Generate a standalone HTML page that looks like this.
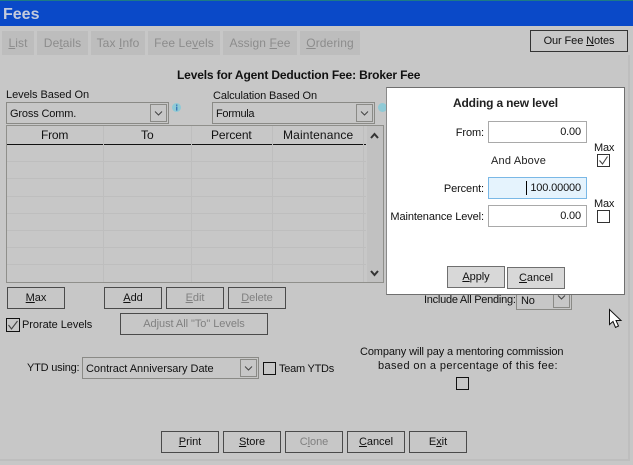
<!DOCTYPE html>
<html>
<head>
<meta charset="utf-8">
<style>
html,body{margin:0;padding:0}
body{width:633px;height:465px;overflow:hidden;position:relative;background:#c7c7c7;font-family:"Liberation Sans",sans-serif;font-size:11px;color:#111}
.a{position:absolute;box-sizing:border-box;white-space:nowrap}
.t{position:absolute;white-space:nowrap;line-height:14px;letter-spacing:0}
.tab{position:absolute;top:31px;height:24px;background:#bdbdbd;color:#8c8c8c;font-size:12px;line-height:25px;text-align:center;letter-spacing:.1px}
.b{position:absolute;box-sizing:border-box;height:22px;border:1px solid #4a4a4a;text-align:center;line-height:21px;font-size:11px;letter-spacing:-.05px;color:#111}
.dis{color:#808080}
.sel{position:absolute;box-sizing:border-box;border:1px solid #8a8a86;height:22px}
.arr{position:absolute;box-sizing:border-box;border:1px solid #8a8a86;width:17px;height:18px;right:1px;top:1px}
.cb{position:absolute;box-sizing:border-box;width:13px;height:13px;border:1px solid #111}
.inp{position:absolute;box-sizing:border-box;left:488px;width:99px;height:22px;border:1px solid #a9a9a9;background:#fff;text-align:right;padding-right:5px;line-height:21px;font-size:11px;letter-spacing:-.15px}
.lab{position:absolute;white-space:nowrap;right:149px;line-height:14px;letter-spacing:-.1px}
u{text-decoration:underline}
svg{position:absolute;overflow:visible}
</style>
</head>
<body>
<div class="a" style="left:0;top:0;width:633px;height:1px;background:#1d7a86"></div>
<div class="a" style="left:0;top:1px;width:633px;height:25px;background:#0a49c8"></div>
<div class="t" style="left:3px;top:6px;font-size:16px;font-weight:bold;color:#c4cbdc;line-height:17px;letter-spacing:0">Fees</div>

<div class="tab" style="left:2px;width:32px"><u>L</u>ist</div>
<div class="tab" style="left:37px;width:51px">De<u>t</u>ails</div>
<div class="tab" style="left:91px;width:54px">Tax <u>I</u>nfo</div>
<div class="tab" style="left:148px;width:72px">Fee Le<u>v</u>els</div>
<div class="tab" style="left:223px;width:74px">Assign <u>F</u>ee</div>
<div class="tab" style="left:300px;width:60px"><u>O</u>rdering</div>

<div class="b" style="left:530px;top:30px;width:98px;border-color:#333;letter-spacing:-.1px">Our Fee <u>N</u>otes</div>
<div class="a" style="left:628px;top:55px;width:2px;height:405px;background:#bebebe"></div>
<div class="a" style="left:0;top:459px;width:630px;height:2px;background:#bebebe"></div>

<div class="t" style="left:177px;top:68px;font-size:12px;font-weight:bold;letter-spacing:-.15px">Levels for Agent Deduction Fee: Broker Fee</div>

<div class="t" style="left:6px;top:88px;letter-spacing:-.05px">Levels Based On</div>
<div class="t" style="left:213px;top:89px;letter-spacing:-.12px">Calculation Based On</div>

<div class="sel" style="left:6px;top:102px;width:163px"><span class="t" style="left:3px;top:4px;letter-spacing:-.15px">Gross Comm.</span>
  <div class="arr"><svg width="15" height="16"><path d="M4 6.5 L7.5 10 L11 6.5" fill="none" stroke="#444" stroke-width="1"/></svg></div>
</div>
<svg style="left:172px;top:103px" width="10" height="10"><circle cx="4.5" cy="4.5" r="4.5" fill="#8fcad6"/><rect x="4" y="1.5" width="1.4" height="1.4" fill="#3a78b8"/><rect x="4" y="3.6" width="1.4" height="4" fill="#3a78b8"/></svg>

<div class="sel" style="left:212px;top:102px;width:163px"><span class="t" style="left:3px;top:4px;letter-spacing:-.3px">Formula</span>
  <div class="arr"><svg width="15" height="16"><path d="M4 6.5 L7.5 10 L11 6.5" fill="none" stroke="#444" stroke-width="1"/></svg></div>
</div>
<svg style="left:378px;top:103px" width="10" height="10"><circle cx="4.5" cy="4.5" r="4.5" fill="#8fcad6"/></svg>

<!-- grid -->
<div class="a" style="left:6px;top:125px;width:378px;height:158px;border:1px solid #8f8f8b"></div>
<div class="a" style="left:7px;top:144px;width:359px;height:1px;background:#111"></div>
<div class="a" style="left:7px;top:161px;width:359px;height:1px;background:#bebebe"></div>
<div class="a" style="left:7px;top:178px;width:359px;height:1px;background:#bebebe"></div>
<div class="a" style="left:7px;top:196px;width:359px;height:1px;background:#bebebe"></div>
<div class="a" style="left:7px;top:213px;width:359px;height:1px;background:#bebebe"></div>
<div class="a" style="left:7px;top:230px;width:359px;height:1px;background:#bebebe"></div>
<div class="a" style="left:7px;top:247px;width:359px;height:1px;background:#bebebe"></div>
<div class="a" style="left:7px;top:264px;width:359px;height:1px;background:#bebebe"></div>
<div class="a" style="left:103px;top:126px;width:1px;height:156px;background:#bebebe"></div>
<div class="a" style="left:191px;top:126px;width:1px;height:156px;background:#bebebe"></div>
<div class="a" style="left:272px;top:126px;width:1px;height:156px;background:#bebebe"></div>
<div class="a" style="left:363px;top:126px;width:1px;height:156px;background:#bebebe"></div>
<div class="a" style="left:367px;top:126px;width:16px;height:156px;background:#c1c1c1"></div>
<div class="t" style="left:41px;top:128px;font-size:12px;letter-spacing:-.2px">From</div>
<div class="t" style="left:141px;top:128px;font-size:12px">To</div>
<div class="t" style="left:211px;top:128px;font-size:12px;letter-spacing:-.1px">Percent</div>
<div class="t" style="left:283px;top:128px;font-size:12px;letter-spacing:.15px">Maintenance</div>
<svg style="left:370px;top:132px" width="10" height="8"><path d="M1 6 L4.5 2 L8 6" fill="none" stroke="#333" stroke-width="2"/></svg>
<svg style="left:370px;top:270px" width="10" height="8"><path d="M1 1 L4.5 5 L8 1" fill="none" stroke="#333" stroke-width="2"/></svg>

<!-- buttons -->
<div class="b" style="left:7px;top:287px;width:58px"><u>M</u>ax</div>
<div class="b" style="left:104px;top:287px;width:58px"><u>A</u>dd</div>
<div class="b dis" style="left:166px;top:287px;width:58px"><u>E</u>dit</div>
<div class="b dis" style="left:228px;top:287px;width:58px"><u>D</u>elete</div>

<div class="cb" style="left:6px;top:318px;width:14px;height:14px"><svg style="left:0;top:0" width="12" height="12"><path d="M1.5 6 L4.5 10 L10.5 2" fill="none" stroke="#444" stroke-width="1.1"/></svg></div>
<div class="t" style="left:22px;top:318px;letter-spacing:-.05px">Prorate Levels</div>
<div class="b dis" style="left:120px;top:313px;width:148px">Adjust All "To" Levels</div>

<div class="t" style="left:27px;top:361px;letter-spacing:-.2px">YTD using:</div>
<div class="sel" style="left:82px;top:357px;width:177px"><span class="t" style="left:3px;top:4px;letter-spacing:-.03px">Contract Anniversary Date</span>
  <div class="arr"><svg width="15" height="16"><path d="M4 6.5 L7.5 10 L11 6.5" fill="none" stroke="#444" stroke-width="1"/></svg></div>
</div>
<div class="cb" style="left:263px;top:362px"></div>
<div class="t" style="left:279px;top:362px;letter-spacing:-.25px">Team YTDs</div>

<div class="t" style="left:360px;top:345px;letter-spacing:-.13px">Company will pay a mentoring commission</div>
<div class="t" style="left:378px;top:359px;letter-spacing:.4px">based on a percentage of this fee:</div>
<div class="cb" style="left:456px;top:377px"></div>

<div class="t" style="left:424px;top:293px;letter-spacing:-.25px">Include All Pending:</div>
<div class="sel" style="left:516px;top:285px;width:56px;height:25px"><span class="t" style="left:4px;top:8px;letter-spacing:-.2px">No</span>
  <div class="arr" style="right:1px;top:4px"><svg width="15" height="16"><path d="M4 4.5 L7.5 8 L11 4.5" fill="none" stroke="#444" stroke-width="1"/></svg></div>
</div>

<div class="b" style="left:161px;top:431px;width:58px"><u>P</u>rint</div>
<div class="b" style="left:223px;top:431px;width:58px"><u>S</u>tore</div>
<div class="b dis" style="left:285px;top:431px;width:58px">C<u>l</u>one</div>
<div class="b" style="left:347px;top:431px;width:58px"><u>C</u>ancel</div>
<div class="b" style="left:409px;top:431px;width:58px">E<u>x</u>it</div>

<!-- dialog -->
<div class="a" style="left:386px;top:87px;width:239px;height:208px;background:#fff;border:1px solid #6f6f6f;border-left-color:#8a8a8a"></div>
<div class="t" style="left:453px;top:96px;font-size:12px;font-weight:bold;letter-spacing:-.17px;color:#222">Adding a new level</div>
<div class="t lab" style="top:126px">From:</div>
<div class="inp" style="top:121px">0.00</div>
<div class="t" style="left:491px;top:154px;letter-spacing:.2px;color:#222">And Above</div>
<div class="t" style="left:594px;top:141px;letter-spacing:-.2px">Max</div>
<div class="cb" style="left:597px;top:154px;border-color:#333"><svg style="left:0;top:0" width="11" height="11"><path d="M1.5 5.5 L4.5 9 L9.5 1.5" fill="none" stroke="#444" stroke-width="1.1"/></svg></div>
<div class="t lab" style="top:182px">Percent:</div>
<div class="inp" style="top:177px;background:#e5f3fd;border-color:#7ab8e6">100.00000</div>
<div class="a" style="left:526px;top:181px;width:1px;height:14px;background:#000"></div>
<div class="t lab" style="top:210px">Maintenance Level:</div>
<div class="inp" style="top:205px">0.00</div>
<div class="t" style="left:594px;top:197px;letter-spacing:-.2px">Max</div>
<div class="cb" style="left:597px;top:210px;border-color:#333"></div>
<div class="b" style="left:447px;top:266px;width:58px;background:#d8d8d8;border-color:#6f6f6f"><u>A</u>pply</div>
<div class="b" style="left:507px;top:267px;width:58px;background:#d8d8d8;border-color:#6f6f6f"><u>C</u>ancel</div>

<!-- cursor -->
<svg style="left:609px;top:309px" width="14" height="20"><path d="M0.5 0.5 L0.5 15.5 L4 12.5 L6.5 18.5 L9.5 17 L7 11.5 L12 11.5 Z" fill="#fff" stroke="#111" stroke-width="1"/></svg>
</body>
</html>
